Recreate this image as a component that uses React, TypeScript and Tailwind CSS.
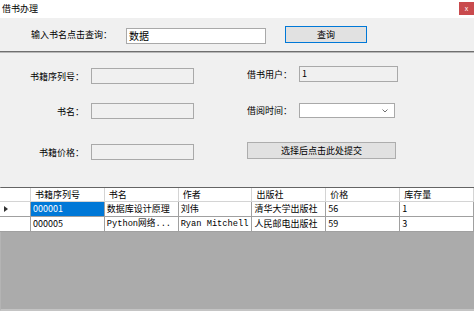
import React from 'react';

const font = { fontFamily: '"Noto Sans CJK SC", "Liberation Sans", sans-serif' };

const cols = ['书籍序列号', '书名', '作者', '出版社', '价格', '库存量'];
const rows = [
  ['000001', '数据库设计原理', '刘伟', '清华大学出版社', '56', '1'],
  ['000005', 'Python网络...', 'Ryan Mitchell', '人民邮电出版社', '59', '3'],
];
const widths = ['w-[74px]', 'w-[74px]', 'w-[74px]', 'w-[74px]', 'w-[74px]', 'w-[74px]'];

function Field({ label, value = '', labelW }: { label: string; value?: string; labelW: string }) {
  return (
    <div className="flex items-center">
      <span className={`${labelW} text-right text-[9px] leading-none`}>{label}</span>
      <div className="ml-[7px] w-[103px] h-[16px] border border-[#a9a9a9] bg-[#f0f0f0] text-[9px] leading-[14px] pl-[2px]">
        {value}
      </div>
    </div>
  );
}

export default function App() {
  return (
    <div className="w-[474px] h-[311px] bg-[#f0f0f0] flex flex-col text-black overflow-hidden" style={font}>
      {/* title bar */}
      <div className="h-[18px] bg-white flex items-start justify-between shrink-0">
        <span className="text-[9px] leading-[18px] pl-[2px]">借书办理</span>
        <div className="mt-[2px] w-[15px] h-[13px] bg-[#c94a4d] flex items-center justify-center text-white text-[7px] leading-none">x</div>
      </div>

      {/* search */}
      <div className="h-[33px] flex items-center shrink-0">
        <span className="ml-[31px] text-[9px] leading-none">输入书名点击查询：</span>
        <div className="ml-[14px] w-[140px] h-[16px] bg-white border border-[#a9a9a9] text-[10px] leading-[14px] pl-[2px] mt-[2px]">数据</div>
        <button className="ml-[19px] w-[82px] h-[17px] bg-[#e1e1e1] border border-[#0078d7] text-[9px] leading-none">查询</button>
      </div>
      <div className="h-[2px] bg-[#6f6f6f] border-b border-[#b8b8b8] shrink-0" />

      {/* form */}
      <div className="flex h-[134px] shrink-0">
        <div className="w-[247px] flex flex-col pt-[15px] gap-[19px]">
          <Field label="书籍序列号：" labelW="w-[84px]" />
          <Field label="书名：" labelW="w-[84px]" />
          <div className="mt-[6px]">
            <Field label="书籍价格：" labelW="w-[84px]" />
          </div>
        </div>
        <div className="flex flex-col pt-[13px]">
          <div className="flex items-center">
            <span className="w-[45px] text-[9px] leading-none">借书用户：</span>
            <div className="ml-[7px] w-[99px] h-[16px] border border-[#a9a9a9] bg-[#f0f0f0] text-[9px] leading-[14px] pl-[2px]">1</div>
          </div>
          <div className="flex items-center mt-[21px]">
            <span className="w-[45px] text-[9px] leading-none">借阅时间：</span>
            <div className="ml-[7px] w-[96px] h-[15px] border border-[#a9a9a9] bg-white flex items-center justify-end pr-[6px]">
              <svg width="6" height="4" viewBox="0 0 6 4">
                <path d="M0.5 0.5 L3 3 L5.5 0.5" stroke="#606060" fill="none" strokeWidth="0.9" />
              </svg>
            </div>
          </div>
          <button className="mt-[24px] w-[149px] h-[17px] bg-[#e1e1e1] border border-[#adadad] text-[9px] leading-none">
            选择后点击此处提交
          </button>
        </div>
      </div>

      {/* grid */}
      <div className="flex-1 flex flex-col border-t border-[#646464] bg-[#ababab] border-b-2 border-b-[#c4c4c4] border-l border-l-[#b4b4b4]">
        <div className="flex h-[14px] bg-white border-b border-[#d4d4d4] -ml-px">
          <div className="w-[31px] border-r border-[#d4d4d4]" />
          {cols.map((c, i) => (
            <div key={c} className={`${widths[i]} border-r border-[#d4d4d4] text-[9px] leading-[14px] pl-[4px]`}>{c}</div>
          ))}
        </div>
        {rows.map((r, ri) => (
          <div key={ri} className="flex h-[15px] bg-white border-b border-[#a0a0a0] -ml-px">
            <div className="w-[31px] border-r border-[#a0a0a0] flex items-center pl-[4px]">
              {ri === 0 && (
                <svg width="4" height="6" viewBox="0 0 4 6">
                  <path d="M0 0 L4 3 L0 6 Z" fill="#333" />
                </svg>
              )}
            </div>
            {r.map((v, i) => (
              <div
                key={i}
                className={`${widths[i]} border-r border-[#a0a0a0] text-[9px] leading-[14px] pl-[2px] whitespace-nowrap overflow-hidden ${
                  ri === 0 && i === 0 ? 'bg-[#0078d7] text-white' : ''
                }`}
                style={ri === 1 && (i === 1 || i === 2) ? { fontFamily: '"Liberation Mono", "Noto Sans CJK SC", monospace', fontSize: '8.7px' } : undefined}
              >
                {v}
              </div>
            ))}
          </div>
        ))}
      </div>
    </div>
  );
}
